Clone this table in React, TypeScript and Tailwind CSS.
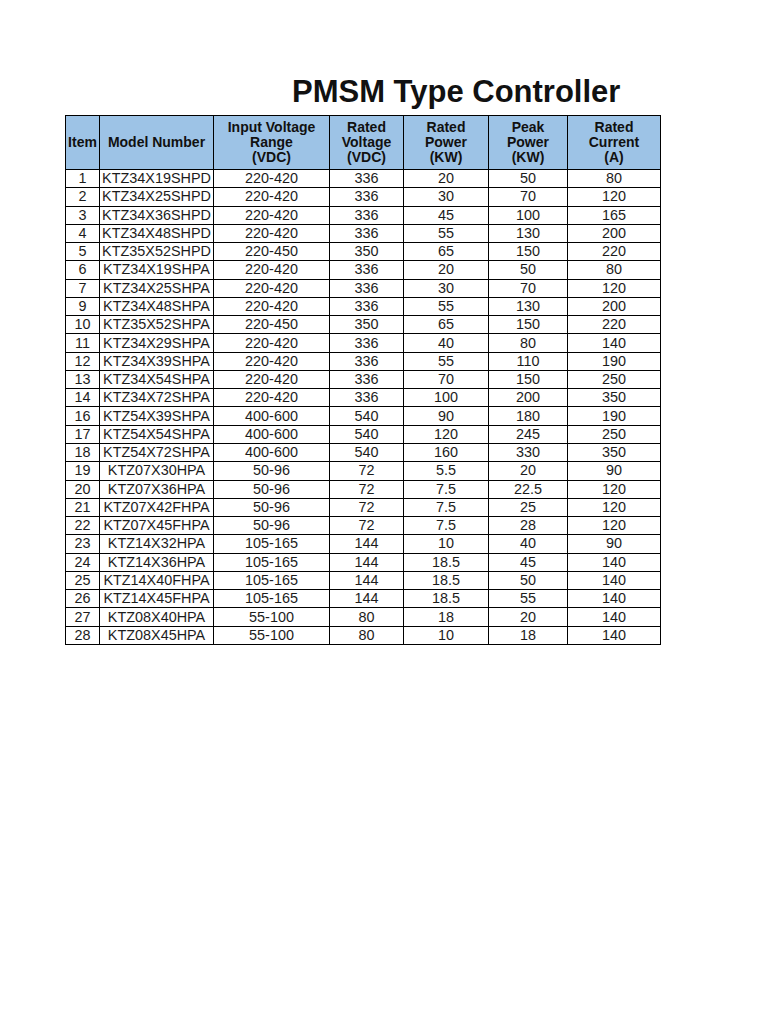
const rows: [string, string, string, string, string, string, string][] = [
  ["1", "KTZ34X19SHPD", "220-420", "336", "20", "50", "80"],
  ["2", "KTZ34X25SHPD", "220-420", "336", "30", "70", "120"],
  ["3", "KTZ34X36SHPD", "220-420", "336", "45", "100", "165"],
  ["4", "KTZ34X48SHPD", "220-420", "336", "55", "130", "200"],
  ["5", "KTZ35X52SHPD", "220-450", "350", "65", "150", "220"],
  ["6", "KTZ34X19SHPA", "220-420", "336", "20", "50", "80"],
  ["7", "KTZ34X25SHPA", "220-420", "336", "30", "70", "120"],
  ["9", "KTZ34X48SHPA", "220-420", "336", "55", "130", "200"],
  ["10", "KTZ35X52SHPA", "220-450", "350", "65", "150", "220"],
  ["11", "KTZ34X29SHPA", "220-420", "336", "40", "80", "140"],
  ["12", "KTZ34X39SHPA", "220-420", "336", "55", "110", "190"],
  ["13", "KTZ34X54SHPA", "220-420", "336", "70", "150", "250"],
  ["14", "KTZ34X72SHPA", "220-420", "336", "100", "200", "350"],
  ["16", "KTZ54X39SHPA", "400-600", "540", "90", "180", "190"],
  ["17", "KTZ54X54SHPA", "400-600", "540", "120", "245", "250"],
  ["18", "KTZ54X72SHPA", "400-600", "540", "160", "330", "350"],
  ["19", "KTZ07X30HPA", "50-96", "72", "5.5", "20", "90"],
  ["20", "KTZ07X36HPA", "50-96", "72", "7.5", "22.5", "120"],
  ["21", "KTZ07X42FHPA", "50-96", "72", "7.5", "25", "120"],
  ["22", "KTZ07X45FHPA", "50-96", "72", "7.5", "28", "120"],
  ["23", "KTZ14X32HPA", "105-165", "144", "10", "40", "90"],
  ["24", "KTZ14X36HPA", "105-165", "144", "18.5", "45", "140"],
  ["25", "KTZ14X40FHPA", "105-165", "144", "18.5", "50", "140"],
  ["26", "KTZ14X45FHPA", "105-165", "144", "18.5", "55", "140"],
  ["27", "KTZ08X40HPA", "55-100", "80", "18", "20", "140"],
  ["28", "KTZ08X45HPA", "55-100", "80", "10", "18", "140"],
];

const headers = [
  ["Item"],
  ["Model Number"],
  ["Input Voltage", "Range", "(VDC)"],
  ["Rated", "Voltage", "(VDC)"],
  ["Rated", "Power", "(KW)"],
  ["Peak", "Power", "(KW)"],
  ["Rated", "Current", "(A)"],
];

const widths = ["w-[34px]", "w-[114px]", "w-[116px]", "w-[74px]", "w-[85px]", "w-[79px]", "w-[93px]"];

export default function App() {
  return (
    <div className="min-h-screen bg-white font-['Liberation_Sans',Arial,sans-serif] text-[#1c1c1c]">
      <h1 className="pl-[292px] pt-[74px] text-[31px] font-bold leading-[36px] text-[#111]">
        PMSM Type Controller
      </h1>
      <div className="pl-[65px] pt-[5px]">
        <table className="w-[596px] table-fixed border-collapse border border-black">
          <colgroup>
            {widths.map((w, i) => (
              <col key={i} className={w} />
            ))}
          </colgroup>
          <thead>
            <tr className="h-[54px] bg-[#9dc3e6]">
              {headers.map((lines, i) => (
                <th
                  key={i}
                  className="border border-black p-0 text-center align-middle text-[14px] font-bold leading-[15px] text-[#111]"
                >
                  {lines.map((l, j) => (
                    <div key={j}>{l}</div>
                  ))}
                </th>
              ))}
            </tr>
          </thead>
          <tbody>
            {rows.map((r) => (
              <tr key={r[0]} className="h-[18.27px]">
                {r.map((c, i) => (
                  <td
                    key={i}
                    className="border border-black p-0 text-center align-middle text-[14.4px] leading-[17px]"
                  >
                    {c}
                  </td>
                ))}
              </tr>
            ))}
          </tbody>
        </table>
      </div>
    </div>
  );
}
